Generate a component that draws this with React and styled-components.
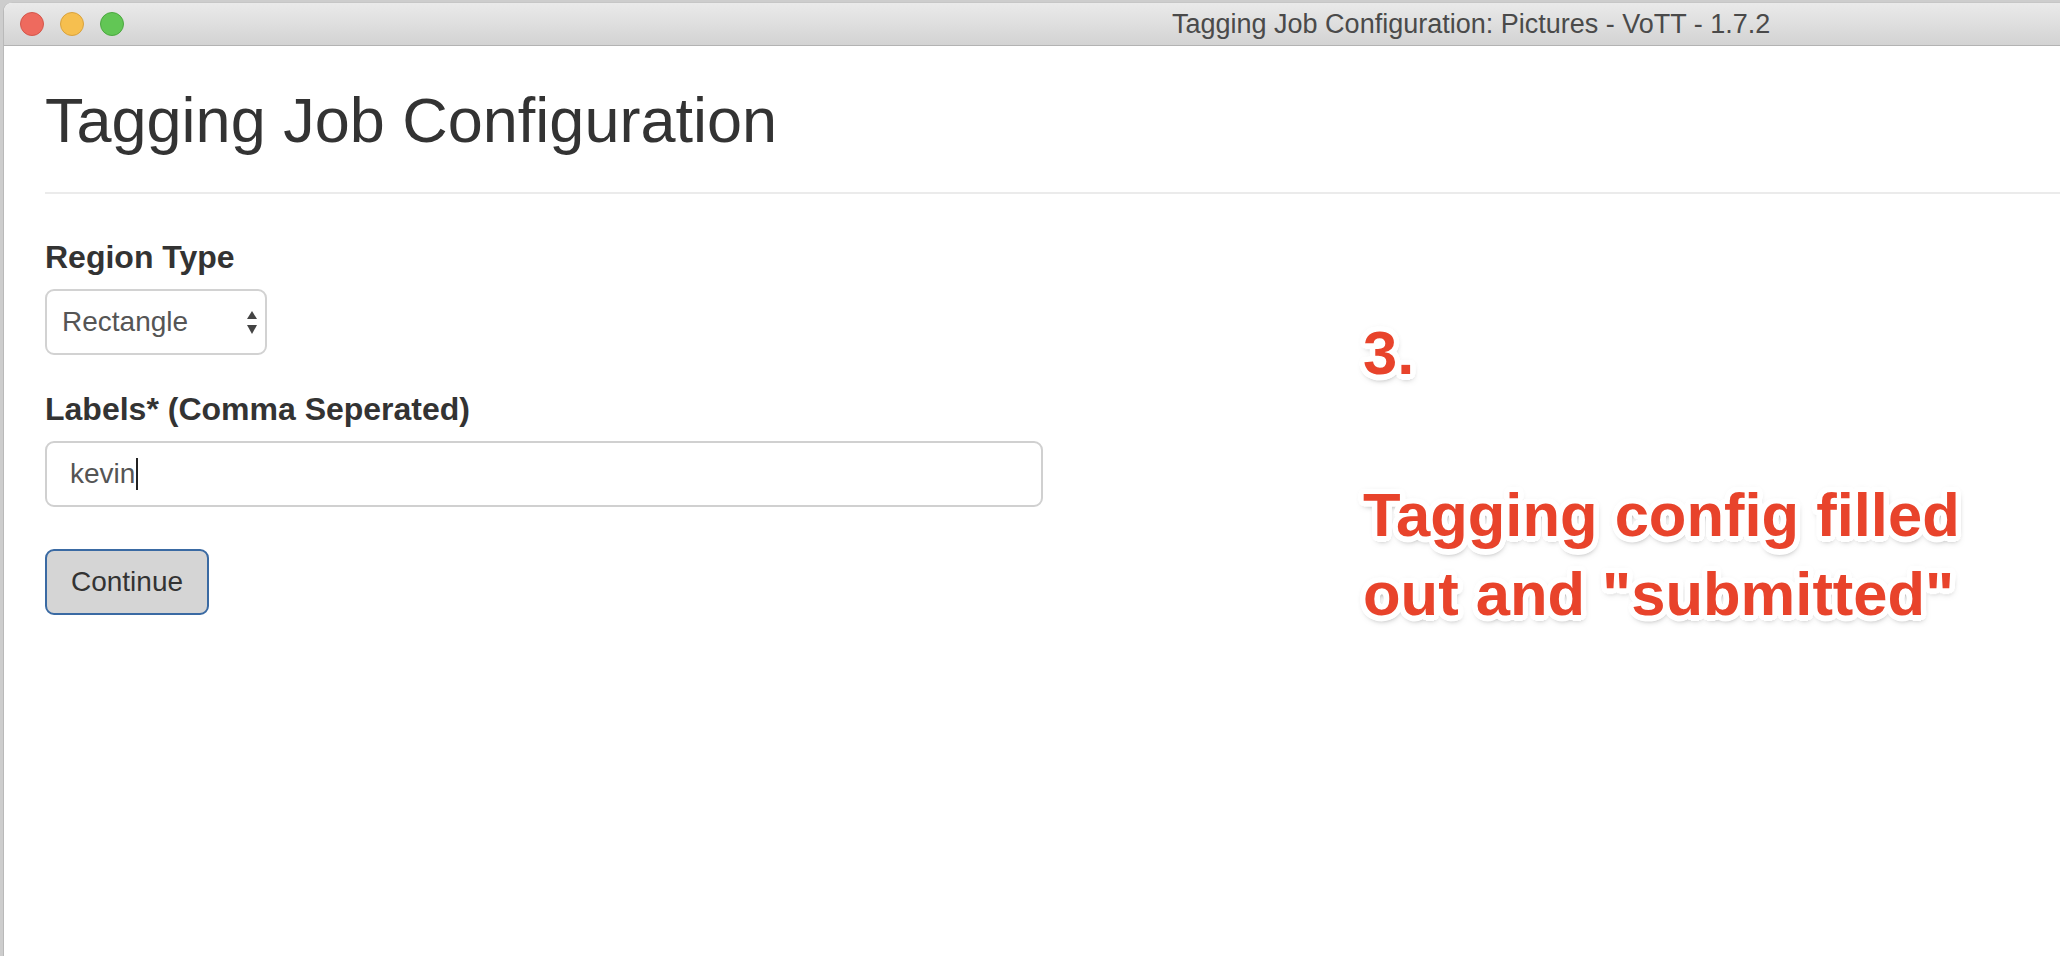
import React from "react";
import styled, { createGlobalStyle } from "styled-components";

const GlobalStyle = createGlobalStyle`
  html, body {
    margin: 0;
    padding: 0;
  }
  body {
    background: #cdcdcd;
    font-family: "Liberation Sans", Arial, sans-serif;
    overflow: hidden;
  }
`;

// white outline + soft drop shadow like the screenshot annotation tool
const outline = (() => {
    const parts = [];
    const r = 5.5;
    for (let i = 0; i < 24; i++) {
        const a = (i / 24) * Math.PI * 2;
        parts.push(`${(Math.cos(a) * r).toFixed(2)}px ${(Math.sin(a) * r).toFixed(2)}px 0 #fff`);
    }
    parts.push("1px 4px 7px rgba(0,0,0,0.55)");
    parts.push("0 0 8px rgba(0,0,0,0.2)");
    return parts.join(", ");
})();

const Window = styled.div`
    margin: 2px 0 0 3px;
    height: calc(100vh - 2px);
    background: #fff;
    border-top-left-radius: 9px;
    border-left: 1px solid #b9b9b9;
    border-top: 1px solid #c6c6c6;
    display: flex;
    flex-direction: column;
    overflow: hidden;
`;

const TitleBar = styled.div`
    height: 42px;
    flex-shrink: 0;
    display: flex;
    align-items: center;
    padding-left: 16px;
    background: linear-gradient(#eaeaea, #d3d3d3);
    border-bottom: 1px solid #b3b3b3;
`;

const Lights = styled.div`
    display: flex;
    gap: 16px;
`;

const Light = styled.span`
    box-sizing: border-box;
    width: 24px;
    height: 24px;
    border-radius: 50%;
    background: ${p => p.fill};
    border: 1px solid ${p => p.edge};
`;

const WindowTitle = styled.div`
    margin-left: 1048px;
    font-size: 27px;
    color: #4a4a4a;
    white-space: nowrap;
`;

const Content = styled.div`
    padding-left: 41px;
    flex: 1;
`;

const PageHeader = styled.div`
    margin-top: 40px;
    padding-bottom: 38px;
    border-bottom: 2px solid #ebebeb;
`;

const Heading = styled.h1`
    margin: 0;
    font-size: 63px;
    line-height: 68px;
    font-weight: normal;
    color: #333;
`;

const Body = styled.div`
    display: flex;
    align-items: flex-start;
`;

const Form = styled.form`
    width: 998px;
    margin-top: 42px;
`;

const FormGroup = styled.div`
    margin-bottom: 33px;
`;

const Label = styled.label`
    display: block;
    font-size: 32px;
    line-height: 43px;
    font-weight: bold;
    color: #333;
    margin-bottom: 10px;
`;

const SelectBox = styled.div`
    box-sizing: border-box;
    width: 222px;
    height: 66px;
    display: flex;
    align-items: center;
    padding: 0 8px 0 15px;
    border: 2px solid #d2d2d2;
    border-radius: 9px;
    background: #fff;
    font-size: 28px;
    color: #555;
`;

const SelectArrows = styled.svg`
    margin-left: auto;
    flex-shrink: 0;
`;

const TextInput = styled.div`
    box-sizing: border-box;
    width: 998px;
    height: 66px;
    display: flex;
    align-items: center;
    padding-left: 23px;
    border: 2px solid #d0d0d0;
    border-radius: 9px;
    font-size: 28px;
    color: #555;
`;

const Caret = styled.span`
    width: 2px;
    height: 32px;
    margin-left: 1px;
    background: #222;
`;

const Button = styled.button`
    box-sizing: border-box;
    width: 164px;
    height: 66px;
    margin-top: 42px;
    display: flex;
    align-items: center;
    justify-content: center;
    background: #d5d5d5;
    border: 2px solid #3a6aa3;
    border-radius: 9px;
    font-family: "Liberation Sans", Arial, sans-serif;
    font-size: 28px;
    color: #333;
    padding: 0;
`;

const Annotation = styled.div`
    margin-left: 320px;
    margin-top: 119px;
    font-family: "Liberation Sans", Arial, sans-serif;
    font-weight: bold;
    font-size: 61.5px;
    line-height: 79px;
    color: #e8432b;
    text-shadow: ${outline};
    white-space: nowrap;
`;

const Caption = styled.div`
    margin-top: 83px;
`;

export default function App() {
    return (
        <>
            <GlobalStyle />
            <Window>
                <TitleBar>
                    <Lights>
                        <Light fill="#ee6a5e" edge="#d4564b" />
                        <Light fill="#f6bf4f" edge="#d9a23d" />
                        <Light fill="#62c655" edge="#4ca840" />
                    </Lights>
                    <WindowTitle>Tagging Job Configuration: Pictures - VoTT - 1.7.2</WindowTitle>
                </TitleBar>
                <Content>
                    <PageHeader>
                        <Heading>Tagging Job Configuration</Heading>
                    </PageHeader>
                    <Body>
                        <Form onSubmit={e => e.preventDefault()}>
                            <FormGroup>
                                <Label>Region Type</Label>
                                <SelectBox>
                                    <span>Rectangle</span>
                                    <SelectArrows width="10" height="23" viewBox="0 0 10 23">
                                        <path d="M0 8 L5 0 L10 8 Z" fill="#444" />
                                        <path d="M0 14 L10 14 L5 23 Z" fill="#444" />
                                    </SelectArrows>
                                </SelectBox>
                            </FormGroup>
                            <FormGroup>
                                <Label>Labels* (Comma Seperated)</Label>
                                <TextInput>
                                    <span>kevin</span>
                                    <Caret />
                                </TextInput>
                            </FormGroup>
                            <Button type="button">Continue</Button>
                        </Form>
                        <Annotation>
                            <div>3.</div>
                            <Caption>
                                Tagging config filled<br />
                                out and "submitted"
                            </Caption>
                        </Annotation>
                    </Body>
                </Content>
            </Window>
        </>
    );
}
